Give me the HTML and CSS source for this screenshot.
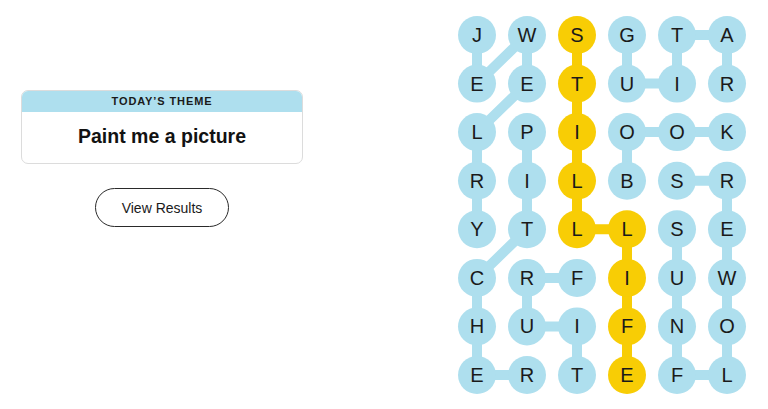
FILE: index.html
```html
<!DOCTYPE html>
<html>
<head>
<meta charset="utf-8">
<link rel="stylesheet" href="styles.css">
</head>
<body>
<main class="page">
  <section class="side">
    <div class="theme">
      <div class="theme-head">TODAY’S THEME</div>
      <div class="theme-body">Paint me a picture</div>
    </div>
    <button class="results">View Results</button>
  </section>
  <section class="board">
    <svg class="grid" width="300" height="390" viewBox="0 0 300 390">
      <g class="links blue">
        <polyline points="25,25 25,73.6 75,25 75,73.6 25,122.1 25,170.7 25,219.3"/>
        <polyline points="75,122.1 75,170.7 75,219.3 25,267.9 25,316.4 25,365 75,365"/>
        <polyline points="125,267.9 75,267.9 75,316.4 125,316.4 125,365"/>
        <polyline points="175,25 175,73.6 225,73.6 225,25 275,25 275,73.6"/>
        <polyline points="175,170.7 175,122.1 225,122.1 275,122.1"/>
        <polyline points="225,219.3 225,267.9 225,316.4 225,365 275,365 275,316.4 275,267.9 275,219.3 275,170.7 225,170.7"/>
      </g>
      <g class="links gold">
        <polyline points="125,25 125,219.3 175,219.3 175,365"/>
      </g>
      <g class="cells">
        <circle class="b" cx="25" cy="25" r="19"/><circle class="b" cx="75" cy="25" r="19"/><circle class="y" cx="125" cy="25" r="19"/><circle class="b" cx="175" cy="25" r="19"/><circle class="b" cx="225" cy="25" r="19"/><circle class="b" cx="275" cy="25" r="19"/>
        <circle class="b" cx="25" cy="73.6" r="19"/><circle class="b" cx="75" cy="73.6" r="19"/><circle class="y" cx="125" cy="73.6" r="19"/><circle class="b" cx="175" cy="73.6" r="19"/><circle class="b" cx="225" cy="73.6" r="19"/><circle class="b" cx="275" cy="73.6" r="19"/>
        <circle class="b" cx="25" cy="122.1" r="19"/><circle class="b" cx="75" cy="122.1" r="19"/><circle class="y" cx="125" cy="122.1" r="19"/><circle class="b" cx="175" cy="122.1" r="19"/><circle class="b" cx="225" cy="122.1" r="19"/><circle class="b" cx="275" cy="122.1" r="19"/>
        <circle class="b" cx="25" cy="170.7" r="19"/><circle class="b" cx="75" cy="170.7" r="19"/><circle class="y" cx="125" cy="170.7" r="19"/><circle class="b" cx="175" cy="170.7" r="19"/><circle class="b" cx="225" cy="170.7" r="19"/><circle class="b" cx="275" cy="170.7" r="19"/>
        <circle class="b" cx="25" cy="219.3" r="19"/><circle class="b" cx="75" cy="219.3" r="19"/><circle class="y" cx="125" cy="219.3" r="19"/><circle class="y" cx="175" cy="219.3" r="19"/><circle class="b" cx="225" cy="219.3" r="19"/><circle class="b" cx="275" cy="219.3" r="19"/>
        <circle class="b" cx="25" cy="267.9" r="19"/><circle class="b" cx="75" cy="267.9" r="19"/><circle class="b" cx="125" cy="267.9" r="19"/><circle class="y" cx="175" cy="267.9" r="19"/><circle class="b" cx="225" cy="267.9" r="19"/><circle class="b" cx="275" cy="267.9" r="19"/>
        <circle class="b" cx="25" cy="316.4" r="19"/><circle class="b" cx="75" cy="316.4" r="19"/><circle class="b" cx="125" cy="316.4" r="19"/><circle class="y" cx="175" cy="316.4" r="19"/><circle class="b" cx="225" cy="316.4" r="19"/><circle class="b" cx="275" cy="316.4" r="19"/>
        <circle class="b" cx="25" cy="365" r="19"/><circle class="b" cx="75" cy="365" r="19"/><circle class="b" cx="125" cy="365" r="19"/><circle class="y" cx="175" cy="365" r="19"/><circle class="b" cx="225" cy="365" r="19"/><circle class="b" cx="275" cy="365" r="19"/>
      </g>
      <g class="letters">
        <text x="25" y="32">J</text><text x="75" y="32">W</text><text x="125" y="32">S</text><text x="175" y="32">G</text><text x="225" y="32">T</text><text x="275" y="32">A</text>
        <text x="25" y="80.6">E</text><text x="75" y="80.6">E</text><text x="125" y="80.6">T</text><text x="175" y="80.6">U</text><text x="225" y="80.6">I</text><text x="275" y="80.6">R</text>
        <text x="25" y="129.1">L</text><text x="75" y="129.1">P</text><text x="125" y="129.1">I</text><text x="175" y="129.1">O</text><text x="225" y="129.1">O</text><text x="275" y="129.1">K</text>
        <text x="25" y="177.7">R</text><text x="75" y="177.7">I</text><text x="125" y="177.7">L</text><text x="175" y="177.7">B</text><text x="225" y="177.7">S</text><text x="275" y="177.7">R</text>
        <text x="25" y="226.3">Y</text><text x="75" y="226.3">T</text><text x="125" y="226.3">L</text><text x="175" y="226.3">L</text><text x="225" y="226.3">S</text><text x="275" y="226.3">E</text>
        <text x="25" y="274.9">C</text><text x="75" y="274.9">R</text><text x="125" y="274.9">F</text><text x="175" y="274.9">I</text><text x="225" y="274.9">U</text><text x="275" y="274.9">W</text>
        <text x="25" y="323.4">H</text><text x="75" y="323.4">U</text><text x="125" y="323.4">I</text><text x="175" y="323.4">F</text><text x="225" y="323.4">N</text><text x="275" y="323.4">O</text>
        <text x="25" y="372">E</text><text x="75" y="372">R</text><text x="125" y="372">T</text><text x="175" y="372">E</text><text x="225" y="372">F</text><text x="275" y="372">L</text>
      </g>
    </svg>
  </section>
</main>
</body>
</html>
```
FILE: styles.css
```css
* { box-sizing: border-box; }
html, body { margin: 0; padding: 0; background: #ffffff; }
body {
  width: 768px;
  height: 409px;
  overflow: hidden;
  font-family: "Liberation Sans", Arial, sans-serif;
  color: #121212;
}
.page {
  display: flex;
  align-items: flex-start;
}
.side {
  width: 282px;
  margin-left: 21px;
  padding-top: 90px;
  display: flex;
  flex-direction: column;
  align-items: center;
}
.theme {
  width: 282px;
  border: 1px solid #dcdcdc;
  border-radius: 7px;
  overflow: hidden;
}
.theme-head {
  background: #aedfee;
  height: 21px;
  line-height: 21px;
  text-align: center;
  font-size: 11px;
  font-weight: 700;
  letter-spacing: 0.9px;
  color: #1a1a1a;
}
.theme-body {
  height: 51px;
  line-height: 49px;
  text-align: center;
  font-size: 19.5px;
  font-weight: 700;
  color: #121212;
}
.results {
  margin-top: 24px;
  width: 134px;
  height: 39px;
  border: 1px solid #2a2a2a;
  border-radius: 20px;
  background: #fff;
  font-family: "Liberation Sans", Arial, sans-serif;
  font-size: 14px;
  color: #1a1a1a;
  padding: 0;
}
.board {
  margin-left: 149px;
  padding-top: 10px;
}
.grid { display: block; }
.links polyline {
  fill: none;
  stroke-width: 10;
  stroke-linejoin: round;
  stroke-linecap: round;
}
.links.blue polyline { stroke: #aedfee; }
.links.gold polyline { stroke: #f8cd05; }
.cells .b { fill: #aedfee; }
.cells .y { fill: #f8cd05; }
.letters text {
  font-family: "Liberation Sans", Arial, sans-serif;
  font-size: 20px;
  fill: #1a1a1a;
  text-anchor: middle;
}
```
